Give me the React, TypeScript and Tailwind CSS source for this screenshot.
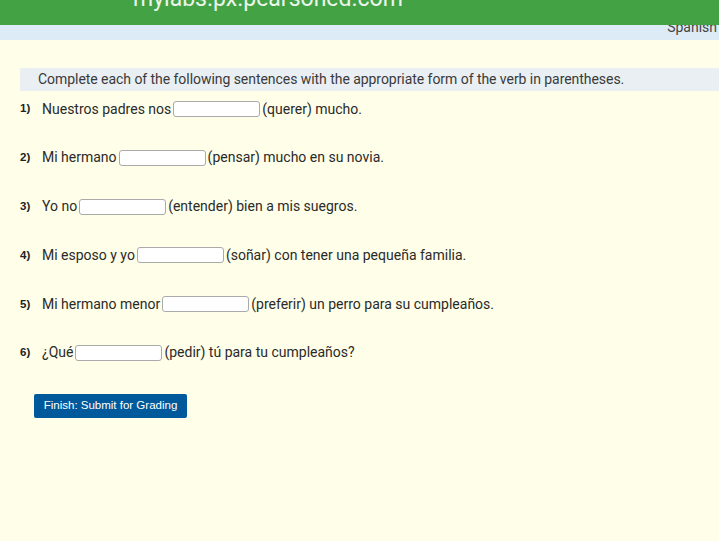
const items = [
  { before: "Nuestros padres nos", after: "(querer) mucho." },
  { before: "Mi hermano", after: "(pensar) mucho en su novia." },
  { before: "Yo no", after: "(entender) bien a mis suegros." },
  { before: "Mi esposo y yo", after: "(soñar) con tener una pequeña familia." },
  { before: "Mi hermano menor", after: "(preferir) un perro para su cumpleaños." },
  { before: "¿Qué", after: "(pedir) tú para tu cumpleaños?" },
];

export default function App() {
  return (
    <div className="w-[719px] h-[541px] overflow-hidden bg-[#fefee9] font-['Roboto',sans-serif] text-[#333]">
      <div className="relative z-10 h-[25px] bg-[#43a244] overflow-hidden">
        <div className="pl-[133px] mt-[-14px] text-[23px] leading-[26px] text-white/90 font-['Roboto',sans-serif]">
          mylabs.px.pearsoned.com
        </div>
      </div>
      <div className="h-[15px] bg-[#dcebf5] overflow-hidden flex justify-end">
        <span className="mt-[-6px] pr-[2px] text-[14px] leading-[16px] text-[#444]">Spanish</span>
      </div>

      <div className="pt-[28px] pl-[20px]">
        <div className="h-[23px] bg-[#e9eff3] pl-[18px] flex items-center text-[14px] tracking-[-0.05px] text-[#3a3a3a]">
          Complete each of the following sentences with the appropriate form of the verb in parentheses.
        </div>

        <ol className="mt-[10px] flex flex-col gap-[32.8px]">
          {items.map((item, i) => (
            <li key={i} className="h-[16px] flex items-center text-[14px] text-[#2a2a2a]">
              <span className="w-[22px] font-['Liberation_Sans',sans-serif] font-bold text-[11.5px] text-[#222]">
                {i + 1})
              </span>
              <span className="mr-[2px]">{item.before}</span>
              <input
                type="text"
                className="w-[87px] h-[16px] bg-white border border-[#aaaaaa] rounded-[3px] mr-[2px]"
              />
              <span>{item.after}</span>
            </li>
          ))}
        </ol>

        <button className="mt-[33px] ml-[14px] w-[153px] h-[24px] bg-[#00599a] text-white rounded-[2px] font-['Liberation_Sans',sans-serif] text-[11.5px]">
          Finish: Submit for Grading
        </button>
      </div>
    </div>
  );
}
